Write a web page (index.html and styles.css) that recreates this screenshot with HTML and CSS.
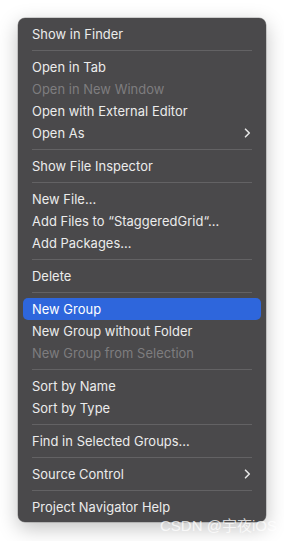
FILE: index.html
```html
<!DOCTYPE html>
<html lang="en">
<head>
    <meta charset="UTF-8">
    <title>Context Menu</title>
    <link rel="stylesheet" href="styles.css">
</head>
<body>
    <div class="menu">
        <div class="item">Show in Finder</div>
        <div class="sep"></div>
        <div class="item">Open in Tab</div>
        <div class="item disabled">Open in New Window</div>
        <div class="item">Open with External Editor</div>
        <div class="item">Open As
            <svg class="chev" width="7" height="10" viewBox="0 0 7 10"><path d="M1.5 1.2 L5.3 5 L1.5 8.8" fill="none" stroke="#e6e6e6" stroke-width="1.6" stroke-linecap="round" stroke-linejoin="round"/></svg>
        </div>
        <div class="sep"></div>
        <div class="item">Show File Inspector</div>
        <div class="sep"></div>
        <div class="item">New File...</div>
        <div class="item">Add Files to “StaggeredGrid“...</div>
        <div class="item">Add Packages...</div>
        <div class="sep"></div>
        <div class="item">Delete</div>
        <div class="sep"></div>
        <div class="item active">New Group</div>
        <div class="item">New Group without Folder</div>
        <div class="item disabled">New Group from Selection</div>
        <div class="sep"></div>
        <div class="item">Sort by Name</div>
        <div class="item">Sort by Type</div>
        <div class="sep"></div>
        <div class="item">Find in Selected Groups...</div>
        <div class="sep"></div>
        <div class="item">Source Control
            <svg class="chev" width="7" height="10" viewBox="0 0 7 10"><path d="M1.5 1.2 L5.3 5 L1.5 8.8" fill="none" stroke="#e6e6e6" stroke-width="1.6" stroke-linecap="round" stroke-linejoin="round"/></svg>
        </div>
        <div class="sep"></div>
        <div class="item">Project Navigator Help</div>
    </div>
    <div class="watermark">CSDN @宇夜iOS</div>
</body>
</html>
```

FILE: styles.css
```css
* {
    margin: 0;
    padding: 0;
    box-sizing: border-box;
}

body {
    width: 284px;
    height: 541px;
    background: #ffffff;
    font-family: Inter, "Noto Sans CJK SC", sans-serif;
    position: relative;
    padding: 18px 0 0 18px;
}

.menu {
    width: 248px;
    height: 504px;
    background: #4a494b;
    border-radius: 7px;
    padding: 5px 5px 4px;
    box-shadow: 0 6px 20px rgba(0, 0, 0, 0.25), 0 0 0 0.5px rgba(0, 0, 0, 0.3);
}

.item {
    height: 22px;
    padding: 0 9px;
    display: flex;
    align-items: center;
    justify-content: space-between;
    font-size: 12.9px;
    color: #ececec;
    border-radius: 5px;
    letter-spacing: 0.05px;
}

.item.disabled {
    color: #7e7d7f;
}

.item.active {
    background: #2e66dc;
    color: #ffffff;
}

.chev {
    margin-right: 1px;
}

.sep {
    height: 11px;
    display: flex;
    align-items: center;
    padding: 0 9px;
}

.sep::after {
    content: "";
    flex: 1;
    height: 1px;
    background: #636264;
}

/* watermark over the bottom edge */
.watermark {
    position: absolute;
    left: 160px;
    top: 514px;
    font-size: 15px;
    color: rgba(255, 255, 255, 0.75);
    font-family: "Liberation Sans", "Noto Sans CJK SC", sans-serif;
}
```
